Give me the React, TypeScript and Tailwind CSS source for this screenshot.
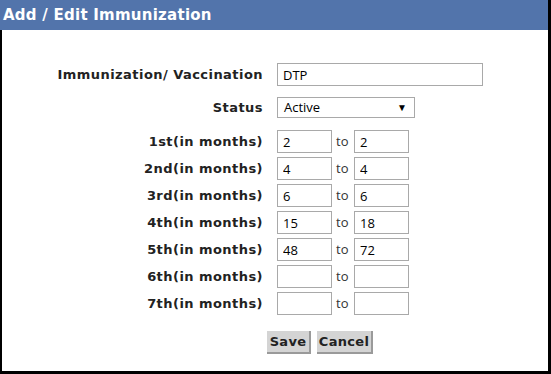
import React from "react";

const rows = [
  { label: "1st(in months)", from: "2", to: "2" },
  { label: "2nd(in months)", from: "4", to: "4" },
  { label: "3rd(in months)", from: "6", to: "6" },
  { label: "4th(in months)", from: "15", to: "18" },
  { label: "5th(in months)", from: "48", to: "72" },
  { label: "6th(in months)", from: "", to: "" },
  { label: "7th(in months)", from: "", to: "" },
];

const labelCls =
  "w-[263px] shrink-0 text-right text-[13px] font-bold text-[#222] tracking-[0.45px] [font-family:'DejaVu_Sans',Verdana,sans-serif]";
const inputCls =
  "h-[23px] border border-[#a9a9a9] bg-white px-[5px] text-[13px] text-black outline-none [font-family:'Open_Sans',sans-serif]";
const btnCls =
  "h-[23px] px-0 bg-[#d4d4d4] border-r-2 border-b-2 border-[#9a9a9a] text-[13px] font-bold text-[#222] tracking-[0.3px] [font-family:'DejaVu_Sans',Verdana,sans-serif]";

export default function App() {
  return (
    <div className="w-[551px] h-[374px] flex flex-col bg-white border-r-[3px] border-black overflow-hidden">
      {/* Title */}
      <div className="h-[30px] shrink-0 bg-[#5274ab] px-[3px] flex items-center">
        <h1 className="text-[15px] font-bold text-white [font-family:'DejaVu_Sans',Verdana,sans-serif] tracking-[0.25px]">
          Add / Edit Immunization
        </h1>
      </div>

      {/* Body */}
      <div className="flex-1 border-l-2 border-b-[3px] border-black pt-[33px]">
        <div className="flex items-center gap-[14px] -ml-[2px]">
          <span className={labelCls}>Immunization/ Vaccination</span>
          <input className={inputCls + " w-[206px]"} defaultValue="DTP" readOnly />
        </div>

        <div className="flex items-center gap-[14px] -ml-[2px] mt-[11px]">
          <span className={labelCls}>Status</span>
          <div className="w-[138px] h-[21px] border border-[#a9a9a9] flex items-center justify-between px-[6px] text-[13px] [font-family:'Open_Sans',sans-serif]">
            <span>Active</span>
            <span className="text-[10px] pr-[1px]">▼</span>
          </div>
        </div>

        <div className="mt-[12px] flex flex-col gap-[4px]">
          {rows.map((r) => (
            <div key={r.label} className="flex items-center gap-[14px] -ml-[2px]">
              <span className={labelCls}>{r.label}</span>
              <div className="flex items-center">
                <input className={inputCls + " w-[55px]"} defaultValue={r.from} readOnly />
                <span className="w-[22px] pl-[4px] text-left text-[13px] text-[#333] [font-family:'Open_Sans',sans-serif]">to</span>
                <input className={inputCls + " w-[55px]"} defaultValue={r.to} readOnly />
              </div>
            </div>
          ))}
        </div>

        <div className="mt-[16px] flex gap-[6px] pl-[265px]">
          <button className={btnCls + " w-[44px]"}>Save</button>
          <button className={btnCls + " w-[56px]"}>Cancel</button>
        </div>
      </div>
    </div>
  );
}
